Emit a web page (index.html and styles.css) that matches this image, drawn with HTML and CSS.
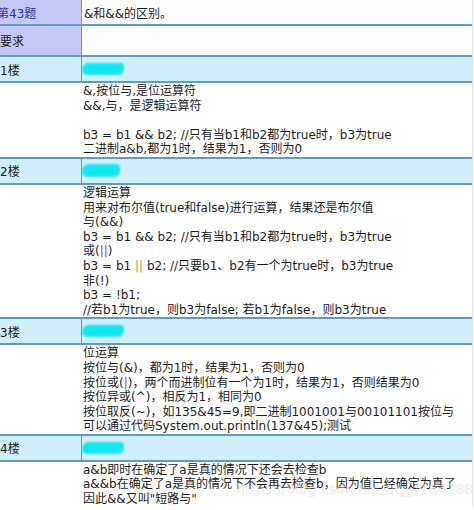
FILE: index.html
```html
<!DOCTYPE html>
<html>
<head>
<meta charset="utf-8">
<link rel="stylesheet" href="styles.css">
</head>
<body>
<div class="sheet">
  <div class="row head h1">
    <div class="lab title">第43题</div>
    <div class="val">&amp;和&amp;&amp;的区别。</div>
  </div>
  <div class="row head h2">
    <div class="lab">要求</div>
    <div class="val"></div>
  </div>

  <div class="row floor">
    <div class="lab">1楼</div>
    <div class="val"><span class="blob"></span></div>
  </div>
  <div class="content">
    <div>&amp;,按位与,是位运算符</div>
    <div>&amp;&amp;,与，是逻辑运算符</div>
    <div>&nbsp;</div>
    <div>b3 = b1 &amp;&amp; b2; //只有当b1和b2都为true时，b3为true</div>
    <div>二进制a&amp;b,都为1时，结果为1，否则为0</div>
  </div>

  <div class="row floor">
    <div class="lab">2楼</div>
    <div class="val"><span class="blob b2"></span></div>
  </div>
  <div class="content">
    <div>逻辑运算</div>
    <div>用来对布尔值(true和false)进行运算，结果还是布尔值</div>
    <div>与(&amp;&amp;)</div>
    <div>b3 = b1 &amp;&amp; b2; //只有当b1和b2都为true时，b3为true</div>
    <div>或(<span class="pipe">||</span>)</div>
    <div>b3 = b1 <span class="pipe2">||</span> b2; //只要b1、b2有一个为true时，b3为true</div>
    <div>非(!)</div>
    <div>b3 = !b1;</div>
    <div>//若b1为true，则b3为false; 若b1为false，则b3为true</div>
  </div>

  <div class="row floor">
    <div class="lab">3楼</div>
    <div class="val"><span class="blob"></span></div>
  </div>
  <div class="content">
    <div>位运算</div>
    <div>按位与(&amp;)，都为1时，结果为1，否则为0</div>
    <div>按位或(<span class="pipe">|</span>)，两个而进制位有一个为1时，结果为1，否则结果为0</div>
    <div>按位异或(^)，相反为1，相同为0</div>
    <div>按位取反(~)，如135&amp;45=9,即二进制1001001与00101101按位与</div>
    <div>可以通过代码System.out.println(137&amp;45);测试</div>
  </div>

  <div class="row floor">
    <div class="lab">4楼</div>
    <div class="val"><span class="blob"></span></div>
  </div>
  <div class="content">
    <div>a&amp;b即时在确定了a是真的情况下还会去检查b</div>
    <div>a&amp;&amp;b在确定了a是真的情况下不会再去检查b，因为值已经确定为真了</div>
    <div>因此&amp;&amp;又叫"短路与"</div>
  </div>
</div>
<div class="watermark">https://blog.csdn.net/qq_41842885</div>
</body>
</html>
```
FILE: styles.css
```css
html, body {
  margin: 0;
  padding: 0;
}
body {
  width: 474px;
  height: 510px;
  overflow: hidden;
  position: relative;
  background: #fff;
  color: #1c1c1c;
  font-family: "DejaVu Sans", "Noto Sans CJK SC", sans-serif;
  font-size: 12px;
}
.sheet {
  display: flex;
  flex-direction: column;
  border-right: 1px solid #e2e2e2;
  width: 472px;
}
.row {
  display: flex;
}
.lab {
  width: 82px;
  flex: none;
  box-sizing: border-box;
  border-right: 1px solid #5d9cc5;
  display: flex;
  align-items: center;
  white-space: nowrap;
  overflow: hidden;
}
.val {
  flex: 1;
  display: flex;
  align-items: center;
  padding-left: 2px;
}
.head .lab {
  background: #c7c7f7;
}
.head .val {
  background: #fdfcff;
}
.h1 {
  height: 24px;
  border-bottom: 2px solid #5d9cc5;
}
.h2 {
  height: 29px;
}
.title {
  color: #2a36a8;
  text-indent: -3px;
}
.floor {
  height: 24px;
  border-top: 2px solid #5d9cc5;
  border-bottom: 2px solid #5d9cc5;
  background: #d0eef8;
}
.floor .val {
  padding-left: 0;
}
.content {
  padding: 1px 0 0 83px;
  line-height: 14.6px;
  white-space: nowrap;
}
.blob {
  display: inline-block;
  width: 42px;
  height: 12px;
  background: #14e6ee;
  border-radius: 7px 4px 6px 5px;
  filter: blur(1px);
}
.blob.b2 {
  width: 38px;
  height: 13px;
}
.pipe {
  color: #7050a0;
}
.pipe2 {
  color: #a89a40;
}
.watermark {
  position: absolute;
  left: 236px;
  top: 481px;
  font-family: "DejaVu Sans", sans-serif;
  font-size: 14px;
  color: rgba(215, 215, 215, 0.5);
  white-space: nowrap;
}
```
